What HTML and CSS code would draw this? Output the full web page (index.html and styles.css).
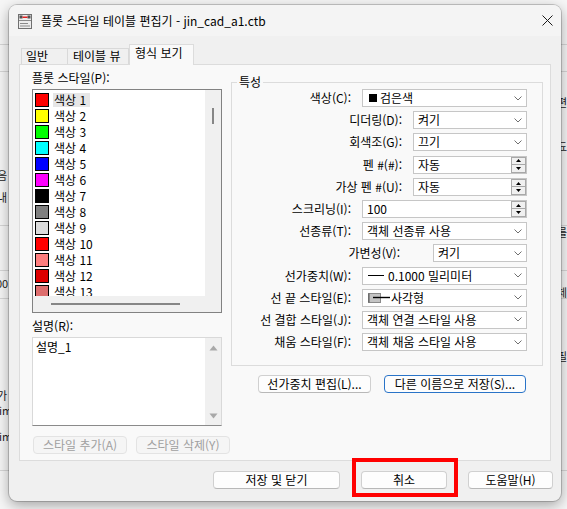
FILE: index.html
```html
<!DOCTYPE html>
<html lang="ko">
<head>
<meta charset="utf-8">
<title>플롯 스타일 테이블 편집기</title>
<link rel="stylesheet" href="styles.css">
</head>
<body>
<div class="desktop">
  <div class="bg-line l1"></div>
  <div class="bg-line l2"></div>
  <div class="bg-line l3"></div>
  <div class="bg-line l4"></div>
  <div class="bg-line l5"></div>
  <div class="bg-line l6"></div>
  <span class="frag f1">음</span>
  <span class="frag f2">내</span>
  <span class="frag f3">00</span>
  <span class="frag f4">가</span>
  <span class="frag f5">im</span>
  <span class="frag f6">im</span>
  <span class="frag r1">편</span>
  <span class="frag r2">됴</span>
  <span class="frag r3">를</span>
  <span class="frag r4">체</span>
  <span class="frag r5">필</span>

  <div class="dialog">
    <div class="titlebar">
      <svg class="app-icon" width="14" height="15" viewBox="0 0 14 15">
        <rect x="0.5" y="0.5" width="13" height="14" fill="#ececec" stroke="#707070"/>
        <rect x="1.5" y="1.5" width="3" height="3" fill="#505050"/>
        <rect x="9.5" y="1.5" width="3" height="3" fill="#505050"/>
        <rect x="4.5" y="2.5" width="5" height="1.5" fill="#e02020"/>
        <line x1="1" y1="6.5" x2="13" y2="6.5" stroke="#8a8a8a"/>
        <line x1="2" y1="9.5" x2="10" y2="9.5" stroke="#8a8a8a"/>
        <line x1="2" y1="12" x2="12" y2="12" stroke="#8a8a8a"/>
      </svg>
      <span class="title">플롯 스타일 테이블 편집기 - jin_cad_a1.ctb</span>
      <svg class="close" width="11" height="11" viewBox="0 0 11 11">
        <path d="M0.5 0.5 L10.5 10.5 M10.5 0.5 L0.5 10.5" stroke="#1a1a1a" stroke-width="1"/>
      </svg>
    </div>

    <div class="tabs">
      <div class="tab t1">일반</div>
      <div class="tab t2">테이블 뷰</div>
      <div class="tab t3 active">형식 보기</div>
    </div>

    <div class="panel">
      <div class="left-col">
        <div class="lbl">플롯 스타일(P):</div>
        <div class="listbox">
          <ul class="items">
            <li><span class="sw" style="background:#ff0000"></span><span class="name sel">색상 1</span></li>
            <li><span class="sw" style="background:#ffff00"></span><span class="name">색상 2</span></li>
            <li><span class="sw" style="background:#00ff00"></span><span class="name">색상 3</span></li>
            <li><span class="sw" style="background:#00ffff"></span><span class="name">색상 4</span></li>
            <li><span class="sw" style="background:#0000ff"></span><span class="name">색상 5</span></li>
            <li><span class="sw" style="background:#ff00ff"></span><span class="name">색상 6</span></li>
            <li><span class="sw" style="background:#000000"></span><span class="name">색상 7</span></li>
            <li><span class="sw" style="background:#808080"></span><span class="name">색상 8</span></li>
            <li><span class="sw" style="background:#dcdcdc"></span><span class="name">색상 9</span></li>
            <li><span class="sw" style="background:#ff0000"></span><span class="name">색상 10</span></li>
            <li><span class="sw" style="background:#ff7f7f"></span><span class="name">색상 11</span></li>
            <li><span class="sw" style="background:#dd0000"></span><span class="name">색상 12</span></li>
            <li><span class="sw" style="background:#dd6e6e"></span><span class="name">색상 13</span></li>
          </ul>
          <div class="vscroll"><div class="vthumb"></div></div>
          <div class="hscroll"><div class="hthumb"></div></div>
        </div>

        <div class="lbl lbl2">설명(R):</div>
        <div class="textarea">
          <div class="tx">설명_1</div>
          <div class="tscroll">
            <svg class="arr" width="9" height="6" viewBox="0 0 9 6"><path d="M4.5 0.5 L8.5 5.5 L0.5 5.5 Z" fill="#a8a8a8"/></svg>
            <svg class="arr" width="9" height="6" viewBox="0 0 9 6"><path d="M0.5 0.5 L8.5 0.5 L4.5 5.5 Z" fill="#a8a8a8"/></svg>
          </div>
        </div>

        <div class="btnrow">
          <button class="btn dis" disabled>스타일 추가(A)</button>
          <button class="btn dis" disabled>스타일 삭제(Y)</button>
        </div>
      </div>

      <div class="right-col">
        <fieldset class="group">
          <legend>특성</legend>
          <div class="rows">
            <div class="row">
              <span class="rl">색상(C):</span>
              <div class="ctl combo w165"><span class="blk"></span><span class="val">검은색</span><svg class="chev" width="8" height="5" viewBox="0 0 8 5"><path d="M0.5 0.5 L4 4 L7.5 0.5" fill="none" stroke="#707070"/></svg></div>
            </div>
            <div class="row">
              <span class="rl">디더링(D):</span>
              <div class="ctl combo w114"><span class="val">켜기</span><svg class="chev" width="8" height="5" viewBox="0 0 8 5"><path d="M0.5 0.5 L4 4 L7.5 0.5" fill="none" stroke="#707070"/></svg></div>
            </div>
            <div class="row">
              <span class="rl">회색조(G):</span>
              <div class="ctl combo w114"><span class="val">끄기</span><svg class="chev" width="8" height="5" viewBox="0 0 8 5"><path d="M0.5 0.5 L4 4 L7.5 0.5" fill="none" stroke="#707070"/></svg></div>
            </div>
            <div class="row">
              <span class="rl">펜 #(#):</span>
              <div class="ctl spin w114"><span class="val">자동</span>
                <div class="spinbtns"><span class="sb"><svg width="5" height="3" viewBox="0 0 5 3"><path d="M2.5 0 L5 3 L0 3 Z" fill="#000"/></svg></span><span class="sb"><svg width="5" height="3" viewBox="0 0 5 3"><path d="M0 0 L5 0 L2.5 3 Z" fill="#000"/></svg></span></div>
              </div>
            </div>
            <div class="row">
              <span class="rl">가상 펜 #(U):</span>
              <div class="ctl spin w114"><span class="val">자동</span>
                <div class="spinbtns"><span class="sb"><svg width="5" height="3" viewBox="0 0 5 3"><path d="M2.5 0 L5 3 L0 3 Z" fill="#000"/></svg></span><span class="sb"><svg width="5" height="3" viewBox="0 0 5 3"><path d="M0 0 L5 0 L2.5 3 Z" fill="#000"/></svg></span></div>
              </div>
            </div>
            <div class="row">
              <span class="rl">스크리닝(I):</span>
              <div class="ctl spin w165"><span class="val">100</span>
                <div class="spinbtns"><span class="sb"><svg width="5" height="3" viewBox="0 0 5 3"><path d="M2.5 0 L5 3 L0 3 Z" fill="#000"/></svg></span><span class="sb"><svg width="5" height="3" viewBox="0 0 5 3"><path d="M0 0 L5 0 L2.5 3 Z" fill="#000"/></svg></span></div>
              </div>
            </div>
            <div class="row">
              <span class="rl">선종류(T):</span>
              <div class="ctl combo w165"><span class="val">객체 선종류 사용</span><svg class="chev" width="8" height="5" viewBox="0 0 8 5"><path d="M0.5 0.5 L4 4 L7.5 0.5" fill="none" stroke="#707070"/></svg></div>
            </div>
            <div class="row">
              <span class="rl rl-wide">가변성(V):</span>
              <div class="ctl combo w94"><span class="val">켜기</span><svg class="chev" width="8" height="5" viewBox="0 0 8 5"><path d="M0.5 0.5 L4 4 L7.5 0.5" fill="none" stroke="#707070"/></svg></div>
            </div>
            <div class="row">
              <span class="rl">선가중치(W):</span>
              <div class="ctl combo w165"><span class="lw"></span><span class="val">0.1000 밀리미터</span><svg class="chev" width="8" height="5" viewBox="0 0 8 5"><path d="M0.5 0.5 L4 4 L7.5 0.5" fill="none" stroke="#707070"/></svg></div>
            </div>
            <div class="row">
              <span class="rl">선 끝 스타일(E):</span>
              <div class="ctl combo w165">
                <svg class="endcap" width="22" height="10" viewBox="0 0 22 10"><rect x="0.5" y="0.5" width="12" height="9" fill="#c4c4c4" stroke="#8a8a8a"/><line x1="1" y1="0.5" x2="1" y2="9.5" stroke="#505050"/><line x1="5" y1="4.5" x2="22" y2="4.5" stroke="#000" stroke-width="1.4"/></svg>
                <span class="val">사각형</span><svg class="chev" width="8" height="5" viewBox="0 0 8 5"><path d="M0.5 0.5 L4 4 L7.5 0.5" fill="none" stroke="#707070"/></svg></div>
            </div>
            <div class="row">
              <span class="rl">선 결합 스타일(J):</span>
              <div class="ctl combo w165"><span class="val">객체 연결 스타일 사용</span><svg class="chev" width="8" height="5" viewBox="0 0 8 5"><path d="M0.5 0.5 L4 4 L7.5 0.5" fill="none" stroke="#707070"/></svg></div>
            </div>
            <div class="row">
              <span class="rl">채움 스타일(F):</span>
              <div class="ctl combo w165"><span class="val">객체 채움 스타일 사용</span><svg class="chev" width="8" height="5" viewBox="0 0 8 5"><path d="M0.5 0.5 L4 4 L7.5 0.5" fill="none" stroke="#707070"/></svg></div>
            </div>
          </div>
        </fieldset>

        <div class="btnrow2">
          <button class="btn b113">선가중치 편집(L)...</button>
          <button class="btn b142 default">다른 이름으로 저장(S)...</button>
        </div>
      </div>
    </div>

    <div class="footer">
      <button class="btn b127">저장 및 닫기</button>
      <button class="btn b86">취소</button>
      <button class="btn b85">도움말(H)</button>
    </div>

    <div class="highlight"></div>
  </div>
</div>
</body>
</html>
```

FILE: styles.css
```css
* { box-sizing: border-box; }

html, body {
  margin: 0;
  padding: 0;
}

body {
  width: 567px;
  height: 509px;
  overflow: hidden;
  font-family: "Noto Sans CJK KR", "Noto Sans", sans-serif;
  font-size: 12px;
  color: #000;
}

.desktop {
  position: relative;
  width: 567px;
  height: 509px;
  background: #f6f6f6;
  overflow: hidden;
}

/* background application fragments */
.bg-line {
  position: absolute;
  left: 0;
  width: 567px;
  height: 1px;
  background: #d6d6d6;
}
.l1 { top: 44px; }
.l2 { top: 71px; }
.l3 { top: 225px; }
.l4 { top: 270px; }
.l5 { top: 298px; }
.l6 { top: 470px; }

.frag {
  position: absolute;
  font-size: 11px;
  line-height: 12px;
  color: #222;
}
.f1 { left: -3px; top: 169px; }
.f2 { left: -3px; top: 191px; }
.f3 { left: -4px; top: 277px; }
.f4 { left: -3px; top: 389px; }
.f5 { left: -1px; top: 404px; }
.f6 { left: -1px; top: 430px; }
.r1 { left: 557px; top: 96px; }
.r2 { left: 557px; top: 140px; }
.r3 { left: 557px; top: 226px; }
.r4 { left: 557px; top: 286px; }
.r5 { left: 557px; top: 350px; }

/* dialog window */
.dialog {
  position: absolute;
  left: 9px;
  top: 5px;
  width: 552px;
  height: 496px;
  background: #f0f0f0;
  border-radius: 8px;
  box-shadow: 0 0 0 1px rgba(0, 0, 0, 0.18), 0 4px 14px rgba(0, 0, 0, 0.35);
  display: flex;
  flex-direction: column;
  overflow: hidden;
}

.titlebar {
  height: 31px;
  flex: none;
  display: flex;
  align-items: center;
  padding-left: 9px;
  background: #f4f4f4;
}
.app-icon { flex: none; margin-top: 1px; }
.title {
  margin-left: 9px;
  font-size: 12px;
  line-height: 16px;
  white-space: nowrap;
}
.close { margin-left: auto; margin-right: 8px; }

/* tabs */
.tabs {
  height: 28px;
  flex: none;
  display: flex;
  align-items: flex-end;
  padding-left: 12px;
  position: relative;
  z-index: 2;
}
.tab {
  height: 16px;
  border: 1px solid #d9d9d9;
  border-bottom: none;
  background: #f0f0f0;
  line-height: 14px;
  padding-left: 4px;
  white-space: nowrap;
}
.t1 { width: 47px; }
.t2 { width: 61px; border-left: none; padding-left: 5px; }
.t3 { width: 65px; }
.tab.active {
  height: 21px;
  margin-bottom: -1px;
  background: #f9f9f9;
  border-color: #dcdcdc;
  padding-left: 5px;
  line-height: 16px;
}

/* tab page */
.panel {
  flex: none;
  margin: 0 10px;
  height: 397px;
  background: #f9f9f9;
  border: 1px solid #dcdcdc;
  display: grid;
  grid-template-columns: 199px 312px;
  align-content: start;
  padding: 6px 8px 0 12px;
}

.lbl {
  line-height: 14px;
  height: 14px;
  margin-bottom: 4px;
  white-space: nowrap;
}
.lbl2 { margin-top: 6px; }

.listbox {
  width: 190px;
  height: 224px;
  border: 1px solid #828282;
  background: #fff;
  display: grid;
  grid-template-columns: 1fr 16px;
  grid-template-rows: 1fr 16px;
}
.items {
  list-style: none;
  margin: 0;
  padding: 2px 0 0 2px;
  overflow: hidden;
}
.items li {
  height: 16px;
  display: flex;
  align-items: center;
}
.sw {
  width: 14px;
  height: 14px;
  border: 1px solid #000;
  flex: none;
  margin-right: 4px;
}
.name {
  height: 14px;
  line-height: 14px;
  padding: 0 4px 0 1px;
  white-space: nowrap;
}
.name.sel { background: #e6e6e6; }

.vscroll {
  background: #f0f0f0;
  position: relative;
}
.vthumb {
  position: absolute;
  left: 7px;
  top: 18px;
  width: 2px;
  height: 16px;
  background: #868686;
}
.hscroll {
  grid-column: 1 / 3;
  background: #f0f0f0;
  position: relative;
}
.hthumb {
  position: absolute;
  left: 18px;
  top: 7px;
  width: 129px;
  height: 2px;
  background: #868686;
}

.textarea {
  width: 190px;
  height: 89px;
  border: 1px solid #d9d9d9;
  border-bottom-color: #8a8a8a;
  background: #fff;
  display: flex;
}
.tx {
  flex: 1;
  padding: 2px 3px;
  line-height: 14px;
}
.tscroll {
  width: 16px;
  background: #f0f0f0;
  display: flex;
  flex-direction: column;
  justify-content: space-between;
  align-items: center;
  padding: 7px 0 6px;
}

.btnrow {
  margin-top: 10px;
  margin-left: 1px;
  display: flex;
  gap: 9px;
}

/* buttons */
.btn {
  font-family: inherit;
  font-size: 12px;
  height: 18px;
  line-height: 14px;
  padding: 0;
  background: #fdfdfd;
  border: 1px solid #d0d0d0;
  border-bottom-color: #b8b8b8;
  border-radius: 4px;
  color: #000;
  white-space: nowrap;
  flex: none;
}
.btn.dis {
  width: 94px;
  background: #f5f5f5;
  border-color: #e3e3e3;
  color: #a0a0a0;
}
.btn.default {
  border-color: #2a74c8;
}
.b113 { width: 113px; }
.b142 { width: 142px; }
.b127 { width: 127px; }
.b86 { width: 86px; }
.b85 { width: 85px; }

/* right column */
.group {
  margin: 4px 0 0 0;
  padding: 0 15px 14px 0;
  width: 312px;
  border: 1px solid #dcdcdc;
  min-width: 0;
}
.group legend {
  margin-left: 5px;
  padding: 0 2px;
  line-height: 14px;
  font-size: 12px;
}
.rows {
  display: flex;
  flex-direction: column;
  gap: 4.2px;
}
.row {
  display: flex;
  justify-content: flex-end;
  align-items: center;
  gap: 11px;
  height: 18px;
}
.rl {
  white-space: nowrap;
  line-height: 14px;
}
.rl.rl-wide { margin-right: 22px; }
.ctl {
  height: 18px;
  background: #fff;
  border: 1px solid #c6c6c6;
  display: flex;
  align-items: center;
  padding-left: 4px;
  flex: none;
}
.w165 { width: 165px; }
.w114 { width: 114px; }
.w94 { width: 94px; }
.val {
  white-space: nowrap;
  line-height: 14px;
}
.chev {
  margin-left: auto;
  margin-right: 4px;
  flex: none;
}
.blk {
  width: 8px;
  height: 8px;
  background: #000;
  margin: 0 3px 0 2px;
  flex: none;
}
.lw {
  width: 16px;
  height: 1.4px;
  background: #000;
  margin: 0 4px 0 1px;
  flex: none;
}
.endcap {
  flex: none;
  margin: 0 1px 0 1px;
}

.spin {
  border-color: #c6c6c6;
}
.spinbtns {
  margin-left: auto;
  margin-right: 0;
  width: 15px;
  height: 16px;
  display: flex;
  flex-direction: column;
}
.sb {
  flex: 1;
  border: 1px solid #a8a8a8;
  background: #f0f0f0;
  display: flex;
  align-items: center;
  justify-content: center;
}
.sb + .sb { border-top: none; }

.btnrow2 {
  margin-top: 9px;
  display: flex;
  justify-content: flex-end;
  gap: 13px;
  padding-right: 17px;
}

/* footer */
.footer {
  flex: none;
  display: flex;
  justify-content: flex-end;
  gap: 21px;
  padding: 10px 8px 0 0;
}

/* red annotation box */
.highlight {
  position: absolute;
  left: 343px;
  top: 453px;
  width: 106px;
  height: 39px;
  border: 4px solid #f00;
}
```
